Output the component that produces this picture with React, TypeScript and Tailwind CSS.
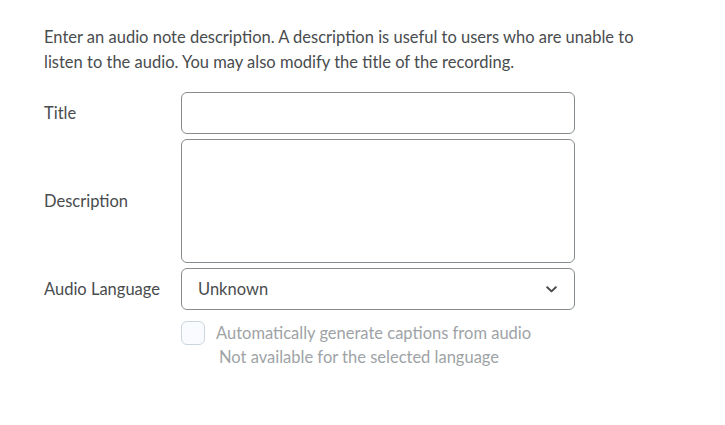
import React from "react";

export default function App() {
  return (
    <div className="w-[725px] h-[425px] bg-white text-[#494c4e]" style={{ fontFamily: "Lato, 'Noto Sans', sans-serif" }}>
      <div className="pl-[44px] pt-[25px] w-[680px]">
        <p className="text-[16.5px] leading-[25px] w-[610px]">
          Enter an audio note description. A description is useful to users who are unable to listen to the audio. You may also modify the title of the recording.
        </p>
        <div className="mt-[17px] flex flex-col gap-[5px]">
          <div className="flex items-center">
            <label className="w-[137px] text-[16.5px]">Title</label>
            <input className="w-[394px] h-[42px] border border-[#868c8f] rounded-[6px] outline-none px-3" />
          </div>
          <div className="flex items-center">
            <label className="w-[137px] text-[16.5px]">Description</label>
            <textarea className="w-[394px] h-[124px] border border-[#868c8f] rounded-[6px] outline-none px-3 resize-none" />
          </div>
          <div className="flex items-center">
            <label className="w-[137px] text-[16.5px]">Audio Language</label>
            <div className="w-[394px] h-[42px] border border-[#868c8f] rounded-[6px] flex items-center justify-between pl-[16px] pr-[17px]">
              <span className="text-[16.5px]">Unknown</span>
              <svg width="11" height="7" viewBox="0 0 11 7" fill="none">
                <path d="M1.2 1.2 L5.5 5.4 L9.8 1.2" stroke="#494c4e" strokeWidth="2" strokeLinecap="round" strokeLinejoin="round" />
              </svg>
            </div>
          </div>
        </div>
        <div className="ml-[137px] mt-[11px] flex items-start gap-[11px]">
          <div className="w-[24px] h-[24px] border border-[#cdd5dc] bg-[#f9fbff] rounded-[6px] shrink-0" />
          <div className="text-[16.5px] text-[#9ea3a6] leading-[24px]">
            <div>Automatically generate captions from audio</div>
            <div className="pl-[3px]">Not available for the selected language</div>
          </div>
        </div>
      </div>
    </div>
  );
}
